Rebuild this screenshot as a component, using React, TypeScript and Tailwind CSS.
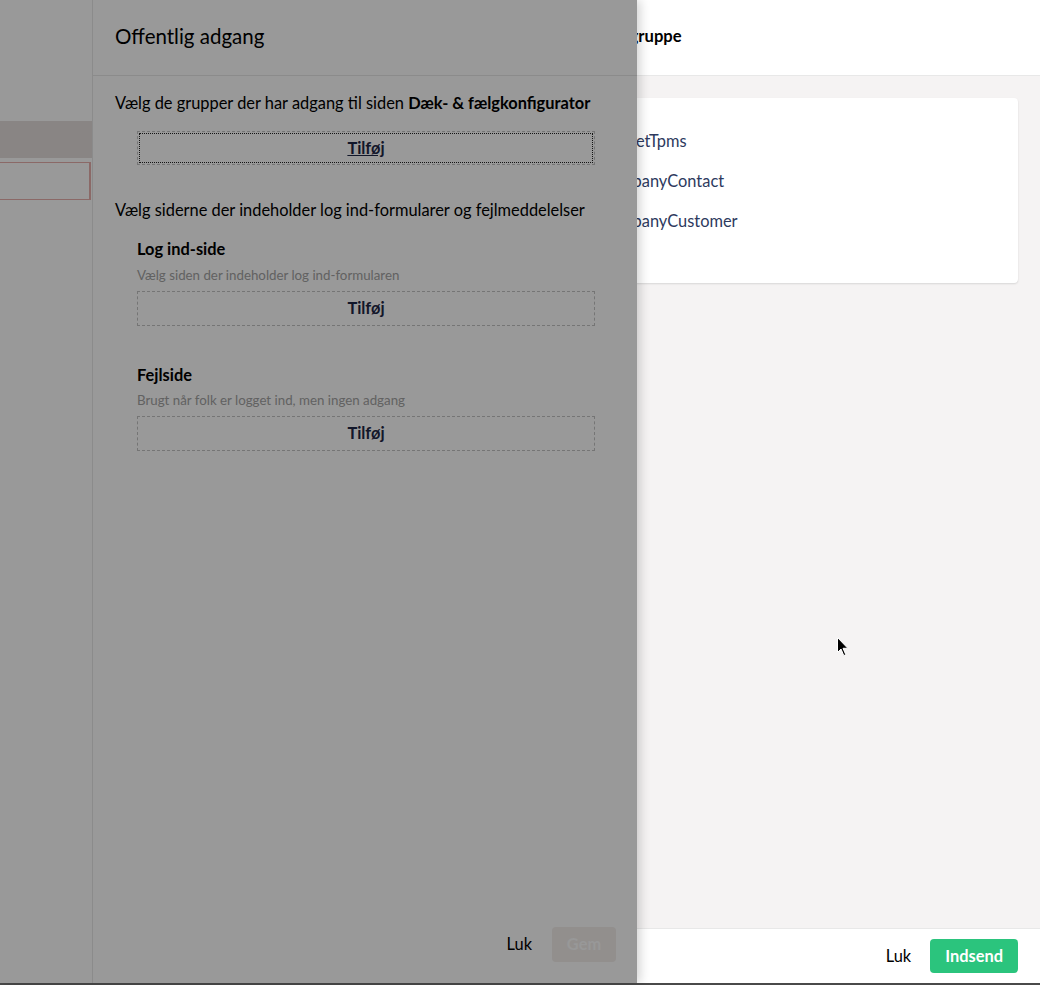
import React from "react";

function AddBox({ focused, h }: { focused?: boolean; h: string }) {
  return (
    <div
      className={`mx-[22px] flex ${h} items-center justify-center border border-dashed border-[#c4c4c4] ${
        focused ? "outline-1 outline-dotted outline-offset-[-3px] outline-[#222]" : ""
      }`}
    >
      <span className={`text-[16.4px] font-bold text-[#1e2746] ${focused ? "underline" : ""}`}>Tilføj</span>
    </div>
  );
}

export default function App() {
  return (
    <div className="flex h-[985px] w-[1040px] flex-col overflow-hidden font-['Lato','Noto_Sans',sans-serif]">
      <div className="relative flex min-h-0 flex-1 justify-end bg-white">
        {/* Right drawer: Vælg gruppe */}
        <div className="flex h-full w-[476px] flex-col bg-white">
          <div className="flex h-[76px] shrink-0 items-center border-b border-[#e8e8e8] pl-[25px] pr-6 pb-1">
            <h2 className="text-[16.6px] font-bold leading-5 text-black">Vælg gruppe</h2>
          </div>
          <div className="flex-1 bg-[#f5f3f3] px-[22px] pt-[22px]">
            <div className="h-[185px] rounded-[4px] bg-white px-[13px] pt-[23px] shadow-[0_1px_2px_rgba(0,0,0,0.12)]">
              {["CanSetTpms", "CompanyContact", "CompanyCustomer"].map((t) => (
                <div key={t} className="flex h-10 items-center text-[16.4px] text-[#2d3a5e]">
                  {t}
                </div>
              ))}
            </div>
          </div>
          <div className="flex h-[55px] shrink-0 items-center justify-end gap-[19px] border-t border-[#e8e8e8] px-[22px]">
            <button className="text-[16.4px] text-black">Luk</button>
            <button className="h-[34px] rounded-[4px] bg-[#2bc47d] px-[15px] text-[16.4px] font-bold text-white">
              Indsend
            </button>
          </div>
        </div>

        {/* Left layer: sidebar + modal, under backdrop */}
        <div className="absolute inset-y-0 left-0 flex w-[637px] shadow-[3px_0_10px_rgba(0,0,0,0.18)]">
          <div className="w-[92px] shrink-0 bg-white">
            <div className="mt-[121px] h-[37px] bg-[#e4dedc]" />
            <div className="mt-[4px] h-[38px] w-[91px] border-y border-r-2 border-[#e8b0ac]" />
          </div>
          <div className="flex flex-1 flex-col border-l border-[#e8e8e8] bg-white">
            <div className="flex h-[76px] shrink-0 items-center border-b border-[#e8e8e8] px-[22px] pb-[3px]">
              <h1 className="text-[20.5px] leading-6 text-black">Offentlig adgang</h1>
            </div>
            <div className="flex-1 pl-[22px] pr-[20px] pt-[17px]">
              <p className="text-[16.4px] leading-5 text-black">
                Vælg de grupper der har adgang til siden <span className="font-bold">Dæk- &amp; fælgkonfigurator</span>
              </p>
              <div className="mt-[18px]">
                <AddBox focused h="h-[34px]" />
              </div>
              <p className="mt-[35px] text-[16.4px] leading-5 text-black">
                Vælg siderne der indeholder log ind-formularer og fejlmeddelelser
              </p>
              <div className="mt-[19px] px-[22px]">
                <h3 className="text-[16.4px] font-bold leading-5 text-black">Log ind-side</h3>
                <p className="mt-[7px] text-[13.3px] leading-[18px] text-[#a3a3a3]">Vælg siden der indeholder log ind-formularen</p>
              </div>
              <div className="mt-[7px]">
                <AddBox h="h-[35px]" />
              </div>
              <div className="mt-[39px] px-[22px]">
                <h3 className="text-[16.4px] font-bold leading-5 text-black">Fejlside</h3>
                <p className="mt-[6px] text-[13.3px] leading-[18px] text-[#a3a3a3]">Brugt når folk er logget ind, men ingen adgang</p>
              </div>
              <div className="mt-[7px]">
                <AddBox h="h-[35px]" />
              </div>
            </div>
            <div className="flex shrink-0 items-center justify-end gap-5 px-[21px] pb-[21px]">
              <button className="text-[16.4px] text-black">Luk</button>
              <button className="h-[35px] w-[64px] rounded-[4px] bg-[#f3eeec] text-[16.4px] font-bold text-[#fdfdfd]">
                Gem
              </button>
            </div>
          </div>
          <div className="pointer-events-none absolute inset-0 bg-black/40" />
        </div>

        {/* Mouse cursor */}
        <svg className="absolute left-[837px] top-[637px]" width="12" height="20" viewBox="0 0 12 20">
          <path d="M0.5 0.5 L0.5 15.5 L4 12 L6.8 18.6 L8.8 17.7 L6 11.3 L10.8 11.3 Z" fill="#000" stroke="#fff" strokeWidth="1" />
        </svg>
      </div>
      <div className="h-[2px] shrink-0 bg-[#4a4a4a]" />
    </div>
  );
}
